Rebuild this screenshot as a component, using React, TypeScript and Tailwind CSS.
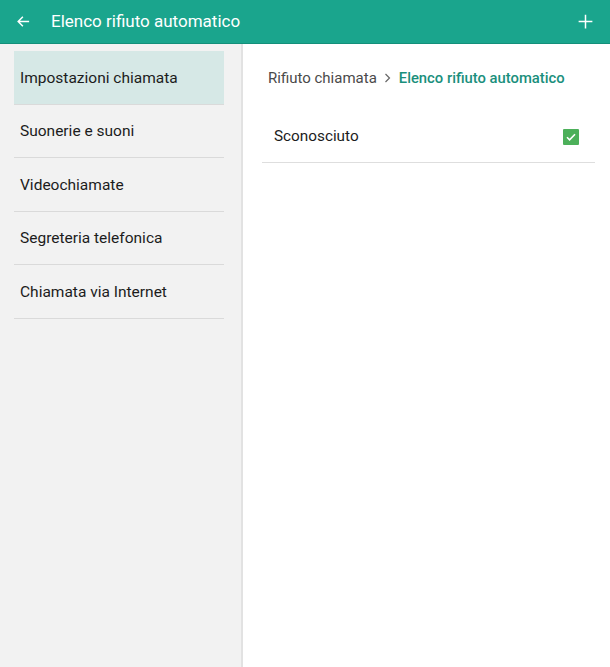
import React from 'react'

const menuItems = [
  'Impostazioni chiamata',
  'Suonerie e suoni',
  'Videochiamate',
  'Segreteria telefonica',
  'Chiamata via Internet',
]

export default function App() {
  return (
    <div className="flex h-[667px] w-[610px] flex-col bg-white font-['Roboto',sans-serif]">
      <header className="flex h-[44px] shrink-0 items-center border-b border-[#148f7a] bg-[#1aa58d] text-white">
        <svg className="ml-[16px] h-[15px] w-[15px]" viewBox="0 0 24 24" fill="none" stroke="white" strokeWidth="2.4">
          <path d="M21 12H4M11 4.5L3.5 12l7.5 7.5" />
        </svg>
        <span className="ml-[20px] text-[17px]">Elenco rifiuto automatico</span>
        <svg className="ml-auto mr-[17px] h-[15px] w-[15px]" viewBox="0 0 24 24" fill="none" stroke="white" strokeWidth="2.4">
          <path d="M12 1v22M1 12h22" />
        </svg>
      </header>
      <div className="flex flex-1">
        <aside className="w-[243px] shrink-0 border-r-2 border-[#e2e2e2] bg-[#f2f2f2] pl-[14px] pr-[17px] pt-[7px]">
          {menuItems.map((item, idx) => (
            <div
              key={item}
              className={
                'flex h-[53.5px] items-center border-b border-[#dadada] pl-[6px] pt-[2px] text-[15.5px] text-[#1c1c1c] ' +
                (idx === 0 ? 'bg-[#d6e8e6]' : '')
              }
            >
              {item}
            </div>
          ))}
        </aside>
        <main className="flex-1 pl-[19px] pr-[15px] pt-[23px]">
          <div className="flex items-center pl-[6px] text-[15px]">
            <span className="text-[#4a4a4a]">Rifiuto chiamata</span>
            <svg className="ml-[7px] mr-[8px] h-[10px] w-[7px]" viewBox="0 0 7 10" fill="none" stroke="#666" strokeWidth="1.2">
              <path d="M1.5 1l4 4-4 4" />
            </svg>
            <span className="text-[14.8px] font-medium text-[#1a8f7c]">Elenco rifiuto automatico</span>
          </div>
          <div className="mt-[19px] flex h-[54px] items-center justify-between border-b border-[#dedede] pl-[12px] pr-[16px] pt-[3px]">
            <span className="text-[15.3px] text-[#1c1c1c]">Sconosciuto</span>
            <div className="flex h-[16px] w-[16px] items-center justify-center rounded-[1px] bg-[#4cb05a]">
              <svg className="h-[12px] w-[12px]" viewBox="0 0 12 12" fill="none" stroke="white" strokeWidth="1.6">
                <path d="M2 6.2l2.6 2.6L10 3.3" />
              </svg>
            </div>
          </div>
        </main>
      </div>
    </div>
  )
}
